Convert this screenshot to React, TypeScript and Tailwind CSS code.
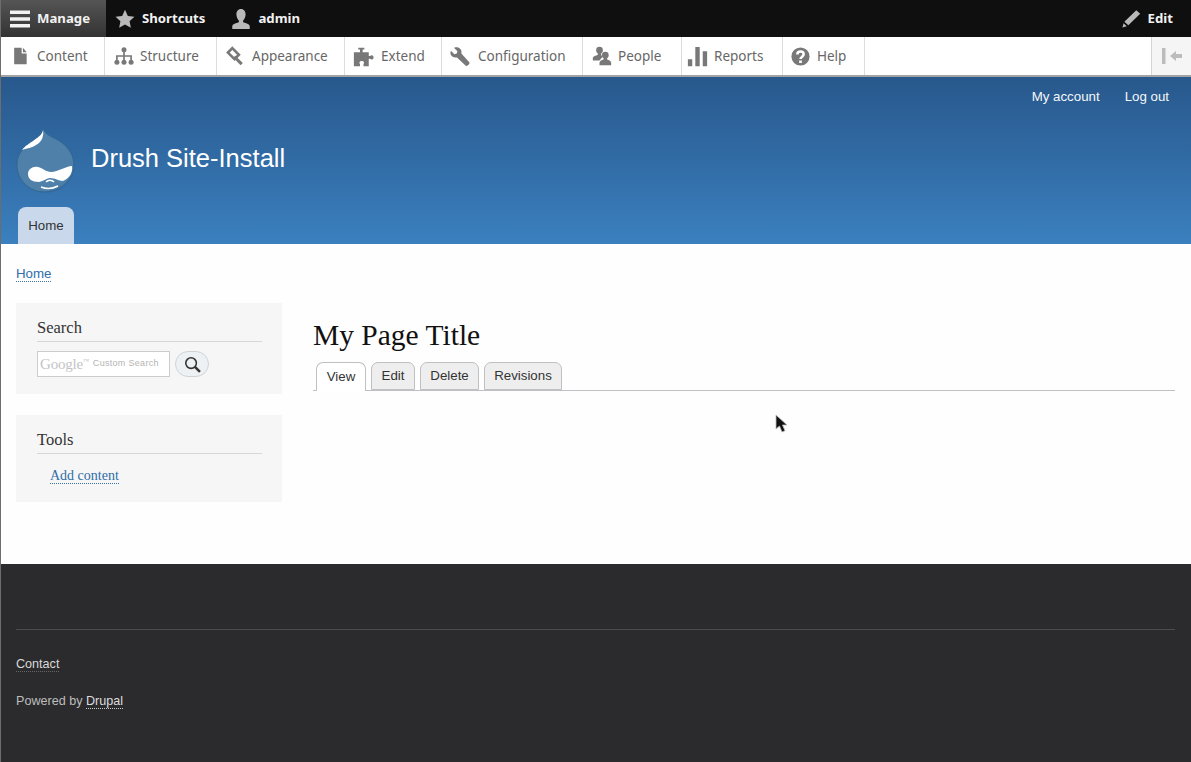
import React from "react";

const G = "#787878";
const Ico = ({ children, w = 24, h = 24, cls = "" }: { children: React.ReactNode; w?: number; h?: number; cls?: string }) => (
  <svg width={w} height={h} viewBox="0 0 24 24" className={"shrink-0 " + cls}>{children}</svg>
);

const tray: { label: string; w: string; pl: string; gap: string; icon: React.ReactNode }[] = [
  { label: "Content", w: "w-[104px]", pl: "pl-[9px]", gap: "gap-[7px]", icon: <Ico w={20} h={20}><path fill={G} d="M5 2h9v7h6v13H5z" /><path fill={G} d="M15.500 2 20 7.500h-4.500z" /></Ico> },
  { label: "Structure", w: "w-[112px]", pl: "pl-[9px]", gap: "gap-[6px]", icon: <Ico w={20} h={20}><g fill={G}><circle cx="12" cy="4.500" r="3" /><circle cx="3.500" cy="19.500" r="3" /><circle cx="12" cy="19.500" r="3" /><circle cx="20.500" cy="19.500" r="3" /><path d="M11 6h2v5h8.500v7h-2v-5H13v5h-2v-5H4.500v5h-2v-7H11z" /></g></Ico> },
  { label: "Appearance", w: "w-[128px]", pl: "pl-[7px]", gap: "gap-[7px]", icon: <Ico w={21} h={21}><path fill="none" stroke={G} strokeWidth="3" d="M9.500 2.500 17 10l-5 5-7.500-7.500z" /><path fill={G} d="m13 11 8.500 8.500-2.500 2.500-8.500-8.500z" /></Ico> },
  { label: "Extend", w: "w-[97px]", pl: "pl-[8px]", gap: "gap-[7px]", icon: <Ico w={21} h={21}><path fill={G} d="M6 2h7v2h-2v3h7v4.500h1.500c1.500-1.500 4-1 4 1.500s-2.500 3-4 1.500H18V23h-6v-2.500c1.500-2 0-3.500-2-3.500s-3.500 1.500-2 3.500V23H1V7h7V4H6z" /></Ico> },
  { label: "Configuration", w: "w-[141px]", pl: "pl-[8px]", gap: "gap-[7px]", icon: <Ico w={21} h={21}><path fill={G} d="M6.500 1.500 4.500 2l4 4-.8 2.700-2.700.8-4-4-.5 2c-.4 3 2.500 6.500 7.500 5.500L18 22.500c1.500 1.300 5.500-2.500 4-4L13 8.500C14 3.500 10 .8 6.500 1.500z" /></Ico> },
  { label: "People", w: "w-[99px]", pl: "pl-[9px]", gap: "gap-[6px]", icon: <Ico w={20} h={20}><g fill={G}><circle cx="9" cy="5" r="4" /><path d="M7 8h4v3l2 1.500-4 5H1v-3c0-2 4-3 6-4z" /><circle cx="16" cy="11" r="4" /><path d="M14 14h4v2c2 1 5 2 5 4v3H9v-3c0-2 3-3 5-4z" /></g></Ico> },
  { label: "Reports", w: "w-[101px]", pl: "pl-[5px]", gap: "gap-[6px]", icon: <Ico w={21} h={21}><path fill={G} d="M1 15h5v8H1zM9.500 1h5v22h-5zM18 6h5v17h-5z" /></Ico> },
  { label: "Help", w: "w-[82px]", pl: "pl-[8px]", gap: "gap-[7px]", icon: <Ico w={19} h={19}><circle cx="12" cy="12" r="11.500" fill={G} /><path fill="none" stroke="#fff" strokeWidth="3.200" d="M8 9.500c0-2.500 2-3.700 4-3.700s4 1.200 4 3.400c0 3-4 3-4 6" /><rect x="10.300" y="17" width="3.400" height="3.200" fill="#fff" /></Ico> },
];

const Logo = () => (
  <svg width="60" height="66" viewBox="0 0 60 66" className="shrink-0">
    <path fill="#4e80aa" stroke="#34678f" strokeWidth="1" d="M27 1c-1 7-9 11-15 16C5 22 1 28 1 37c0 15 12 27 28 27s29-11 29-27c0-12-8-20-16-25C36 9 30 7 27 1z" />
    <path fill="#35689a" opacity="0.55" d="M51 20c7 8 8 18 3 28-6 11-19 17-33 15 16 5 37-4 37-26 0-7-2-12-7-17z" />
    <path fill="#ffffff" d="M27 2C26 10 12 14 6 22c6-2 10-2 14-5 6-3 8-9 7-15z" />
    <path fill="#ffffff" d="M12 46C12 41 17 38 22 39C27 40 30 44 35 44C42 44 50 38 56 38C57 44 54 50 47 53C42 53 40 50 34 50C31 50 28 53 23 54C16 54 12 51 12 46z" />
    <path fill="none" stroke="#ffffff" strokeWidth="1.500" d="M30 54c2-2.500 6-2.500 8 0M25 59c5 2 11 2 17-1" />
  </svg>
);

export default function App() {
  const sans = "font-['Liberation_Sans',Arial,sans-serif]";
  const serif = "font-['Liberation_Serif',serif]";
  const bar = "font-['Noto_Sans',sans-serif]";
  return (
    <div className={`relative flex h-[762px] w-[1191px] flex-col overflow-hidden border-l border-[#6d6d6d] bg-[#fefefe] ${sans}`}>
      <div className={`flex h-[37px] shrink-0 items-center justify-between bg-[#0f0f0f] text-[13.200px] font-bold text-[#f2f2f2] ${bar}`}>
        <div className="flex h-full items-center">
          <div className="flex h-full w-[105px] items-center gap-[6px] bg-gradient-to-b from-[#555555] to-[#333333] pl-[9px]">
            <svg width="21" height="20" viewBox="0 0 21 20"><path fill="#f2f2f2" d="M0 1.500h20v3.500H0zM0 8.300h20v3.500H0zM0 15h20v3.500H0z" /></svg>
            Manage
          </div>
          <div className="flex items-center gap-[7px] pl-[9px]">
            <svg width="20" height="20" viewBox="0 0 24 24"><path fill="#b9b9b9" d="m12 1 3.400 7.300 7.900.9-5.800 5.400 1.500 7.900-7-3.900-7 3.900 1.500-7.900L.7 9.200l7.900-.9z" /></svg>
            Shortcuts
          </div>
          <div className="ml-[26px] flex items-center gap-[7px]">
            <svg width="20" height="20" viewBox="0 0 24 24"><path fill="#b9b9b9" d="M12 0c3.500 0 5.500 3 5.500 6.500 0 3-1.500 6-3 7.500v2c3 1 8 2 8 5v3h-21v-3c0-3 5-4 8-5v-2c-1.500-1.500-3-4.500-3-7.500C6.500 3 8.500 0 12 0z" /></svg>
            admin
          </div>
        </div>
        <div className="flex items-center gap-[7px] pr-[18px]">
          <svg width="19" height="19" viewBox="0 0 24 24"><path fill="#b9b9b9" d="M18 1.500 23 6 8 20.500l-5-4.500zM2 18l4 3.700-5.500 1.800z" /></svg>
          Edit
        </div>
      </div>

      <div className={`flex h-[40px] shrink-0 justify-between border-b-2 border-[#a3a3a3] bg-white text-[13.500px] text-[#676767] ${bar}`}>
        <div className="flex">
          {tray.map((t) => (
            <div key={t.label} className={`flex h-full items-center border-r border-[#dcdcdc] ${t.w} ${t.pl} ${t.gap}`}>
              {t.icon}
              <span>{t.label}</span>
            </div>
          ))}
        </div>
        <div className="flex w-[40px] items-center justify-center border-l border-[#d5d5d5] bg-[#f5f5f5]">
          <svg width="20" height="16" viewBox="0 0 20 16"><path fill="#bcbcbc" d="M0 0h3.500v16H0zM8 8l6-5v3h6v4h-6v3z" /></svg>
        </div>
      </div>

      <header className="flex h-[167px] shrink-0 flex-col bg-gradient-to-b from-[#28588c] to-[#3b80bf] pl-[15px] pr-[16px]">
        <div className="flex justify-end gap-[25px] pr-[6px] pt-[11px] text-[13.300px] leading-[18px] text-[#f4f7fa]">
          <span>My account</span>
          <span>Log out</span>
        </div>
        <div className="mt-[22px] flex items-start">
          <Logo />
          <div className="ml-[15px] mt-[14px] text-[25.500px] leading-[32px] text-white">Drush Site-Install</div>
        </div>
        <div className="mt-auto ml-[2px] flex h-[37px] w-[56px] items-center justify-center rounded-t-[8px] bg-[#c9d9eb] text-[13.300px] text-[#333333]">Home</div>
      </header>

      <main className="flex min-h-0 grow flex-col px-[15px] pr-[16px]">
        <div className="pt-[21px] text-[13.300px] leading-[17px]">
          <span className="border-b border-dotted border-[#3b74ad] text-[#2f6da8]">Home</span>
        </div>
        <div className="mt-[21px] flex">
          <aside className={`flex w-[266px] shrink-0 flex-col gap-[21px] ${serif}`}>
            <section className="h-[91px] bg-[#f6f6f6] pl-[21px] pr-[20px] pt-[15px]">
              <h2 className="border-b border-[#d6d6d6] pb-[4px] text-[16.500px] leading-[19px] text-[#333333]">Search</h2>
              <div className="mt-[9px] flex items-center gap-[5px]">
                <div className="flex h-[26px] w-[133px] items-center border border-[#cccccc] bg-white pl-[2px] text-[#c4c4c4]">
                  <span className="text-[15px] tracking-[-0.2px]">Google</span>
                  <span className="mb-[5px] text-[6px]">™</span>
                  <span className={`ml-[4px] text-[9px] tracking-[0.3px] text-[#b4b4b4] ${sans}`}>Custom Search</span>
                </div>
                <div className="flex h-[26px] w-[34px] items-center justify-center rounded-full border border-[#cfd3d6] bg-[#eef1f3]">
                  <svg width="17" height="17" viewBox="0 0 24 24" fill="none" stroke="#333333"><circle cx="10" cy="10" r="7.500" strokeWidth="2.200" /><path strokeWidth="3.500" d="m15.500 15.500 7 7" /></svg>
                </div>
              </div>
            </section>
            <section className="h-[87px] bg-[#f6f6f6] pl-[21px] pr-[20px] pt-[15px]">
              <h2 className="border-b border-[#d6d6d6] pb-[4px] text-[16.500px] leading-[19px] text-[#333333]">Tools</h2>
              <div className="pl-[13px] pt-[13px] text-[14px] leading-[17px]">
                <span className="border-b border-dotted border-[#3b74ad] text-[#2f6da8]">Add content</span>
              </div>
            </section>
          </aside>
          <div className="ml-[31px] min-w-0 grow pt-[14px]">
            <h1 className={`${serif} text-[29.500px] leading-[36px] text-[#111111]`}>My Page Title</h1>
            <div className="mt-[9px] flex h-[29px] gap-[5px] border-b border-[#bfbfc4] pl-[3px] text-[13.300px] text-[#333333]">
              <div className="flex h-[29px] w-[50px] items-center justify-center rounded-t-[7px] border border-b-0 border-[#bfbfc4] bg-white">View</div>
              <div className="flex h-[28px] w-[44px] items-center justify-center rounded-t-[7px] border border-[#bfbfc4] bg-[#eeeeee]">Edit</div>
              <div className="flex h-[28px] w-[59px] items-center justify-center rounded-t-[7px] border border-[#bfbfc4] bg-[#eeeeee]">Delete</div>
              <div className="flex h-[28px] w-[78px] items-center justify-center rounded-t-[7px] border border-[#bfbfc4] bg-[#eeeeee]">Revisions</div>
            </div>
          </div>
        </div>
      </main>

      <footer className="h-[198px] shrink-0 bg-[#2b2b2d] px-[15px] pr-[16px] pt-[65px] text-[12.600px] leading-[16px] text-[#bdbdbd]">
        <div className="border-t border-[#4c4c49]" />
        <div className="pt-[26px] text-[#d9d9d9]">
          <span className="border-b border-dotted border-[#666666]">Contact</span>
        </div>
        <div className="pt-[21px]">
          Powered by <span className="border-b border-dotted border-[#cccccc] text-[#dddddd]">Drupal</span>
        </div>
      </footer>

      <svg width="14" height="20" viewBox="0 0 14 20" className="absolute left-[774px] top-[414px]">
        <path fill="#111111" stroke="#bbbbbb" strokeWidth="0.800" d="M1 1v14l3.500-3 2.500 6 3-1.300-2.500-5.700H12z" />
      </svg>
    </div>
  );
}
